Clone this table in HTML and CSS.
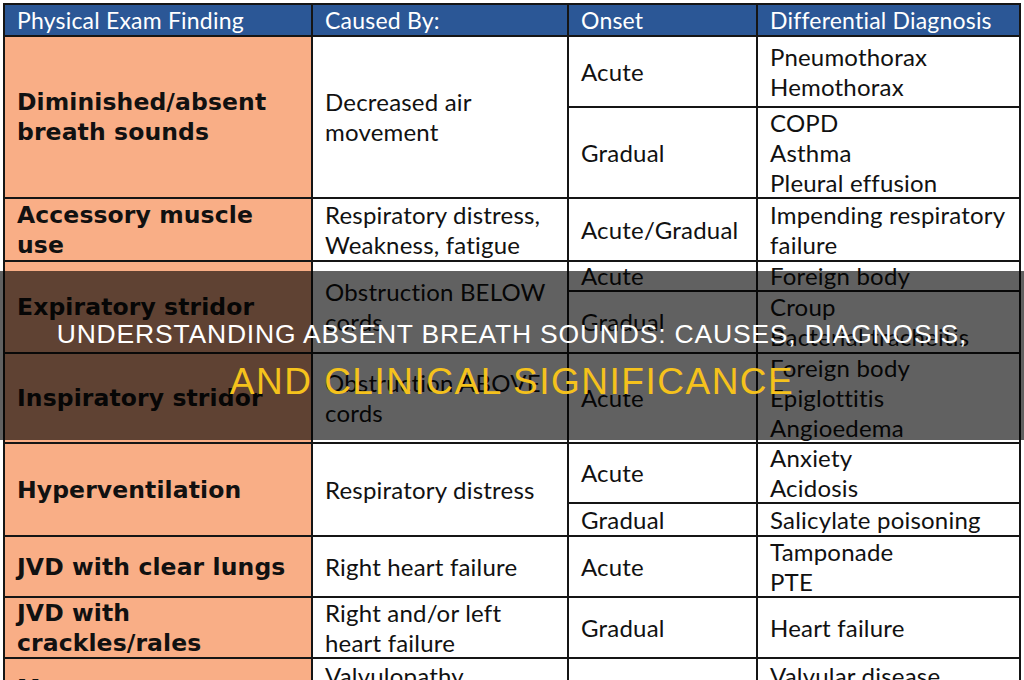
FILE: index.html
```html
<!DOCTYPE html>
<html lang="en">
<head>
<meta charset="utf-8">
<title>Understanding Absent Breath Sounds</title>
<link rel="stylesheet" href="styles.css">
</head>
<body>
<div class="page">
  <div class="grid">
    <div class="cell th"><span>Physical Exam Finding</span></div>
    <div class="cell th"><span>Caused By:</span></div>
    <div class="cell th"><span>Onset</span></div>
    <div class="cell th"><span>Differential Diagnosis</span></div>

    <div class="cell find span2"><span>Diminished/absent<br>breath sounds</span></div>
    <div class="cell span2"><span>Decreased air<br>movement</span></div>
    <div class="cell"><span>Acute</span></div>
    <div class="cell"><span>Pneumothorax<br>Hemothorax</span></div>
    <div class="cell"><span>Gradual</span></div>
    <div class="cell"><span>COPD<br>Asthma<br>Pleural effusion</span></div>

    <div class="cell find"><span>Accessory muscle<br>use</span></div>
    <div class="cell"><span>Respiratory distress,<br>Weakness, fatigue</span></div>
    <div class="cell"><span>Acute/Gradual</span></div>
    <div class="cell"><span>Impending respiratory<br>failure</span></div>

    <div class="cell find span2"><span>Expiratory stridor</span></div>
    <div class="cell span2"><span>Obstruction BELOW<br>cords</span></div>
    <div class="cell"><span>Acute</span></div>
    <div class="cell"><span>Foreign body</span></div>
    <div class="cell"><span>Gradual</span></div>
    <div class="cell"><span>Croup<br>Bacterial tracheitis</span></div>

    <div class="cell find"><span>Inspiratory stridor</span></div>
    <div class="cell"><span>Obstruction ABOVE<br>cords</span></div>
    <div class="cell"><span>Acute</span></div>
    <div class="cell"><span>Foreign body<br>Epiglottitis<br>Angioedema</span></div>

    <div class="cell find span2"><span>Hyperventilation</span></div>
    <div class="cell span2"><span>Respiratory distress</span></div>
    <div class="cell"><span>Acute</span></div>
    <div class="cell"><span>Anxiety<br>Acidosis</span></div>
    <div class="cell"><span>Gradual</span></div>
    <div class="cell"><span>Salicylate poisoning</span></div>

    <div class="cell find"><span>JVD with clear lungs</span></div>
    <div class="cell"><span>Right heart failure</span></div>
    <div class="cell"><span>Acute</span></div>
    <div class="cell"><span>Tamponade<br>PTE</span></div>

    <div class="cell find"><span>JVD with<br>crackles/rales</span></div>
    <div class="cell"><span>Right and/or left<br>heart failure</span></div>
    <div class="cell"><span>Gradual</span></div>
    <div class="cell"><span>Heart failure</span></div>

    <div class="cell find last l1"><span>Murmur</span></div>
    <div class="cell last l2"><span>Valvulopathy</span></div>
    <div class="cell last l3"><span>Gradual</span></div>
    <div class="cell last l2"><span>Valvular disease</span></div>
  </div>

  <div class="banner">
    <div class="t1">UNDERSTANDING ABSENT BREATH SOUNDS: CAUSES, DIAGNOSIS,</div>
    <div class="t2">AND CLINICAL SIGNIFICANCE</div>
  </div>
</div>
</body>
</html>
```
FILE: styles.css
```css
html, body {
  margin: 0;
  padding: 0;
  background: #ffffff;
}
.page {
  position: relative;
  width: 1024px;
  height: 680px;
  overflow: hidden;
  padding: 3px 0 0 3px;
  box-sizing: border-box;
}
.grid {
  display: grid;
  width: max-content;
  grid-template-columns: 306px 254px 187px 261px;
  grid-template-rows: 30px 69px 89px 61px 28px 60px 88px 58px 31px 59px 59px 74px;
  gap: 2px;
  padding: 2px;
  background: #151515;
  font-family: Lato, "Open Sans", sans-serif;
  font-size: 24px;
  letter-spacing: 0.2px;
  line-height: 30px;
  color: #111;
}
.cell {
  background: #ffffff;
  display: flex;
  align-items: center;
  padding-left: 12px;
  white-space: nowrap;
  min-height: 0;
}
.span2 {
  grid-row: span 2;
}
.th {
  background: #2b5796;
  color: #ffffff;
  font-size: 23px;
}
.find {
  background: #f9ae86;
  font-family: "DejaVu Sans", sans-serif;
  font-weight: 700;
  font-size: 23.5px;
  letter-spacing: 0.1px;
}
.last {
  align-items: flex-start;
}
.l1 { padding-top: 14px; }
.l2 { padding-top: 2px; }
.l3 { padding-top: 19px; }

.banner {
  position: absolute;
  left: 0;
  top: 271px;
  width: 1024px;
  height: 169px;
  background: rgba(0, 0, 0, 0.62);
  display: flex;
  flex-direction: column;
  align-items: center;
  justify-content: center;
  padding-top: 5px;
  box-sizing: border-box;
  font-family: "Liberation Sans", Arial, sans-serif;
  text-align: center;
  white-space: nowrap;
}
.t1 {
  color: #ffffff;
  font-size: 26.5px;
  letter-spacing: 0.8px;
  line-height: 48px;
}
.t2 {
  color: #f5c21c;
  font-size: 37px;
  letter-spacing: 1.5px;
  line-height: 48px;
}
```
